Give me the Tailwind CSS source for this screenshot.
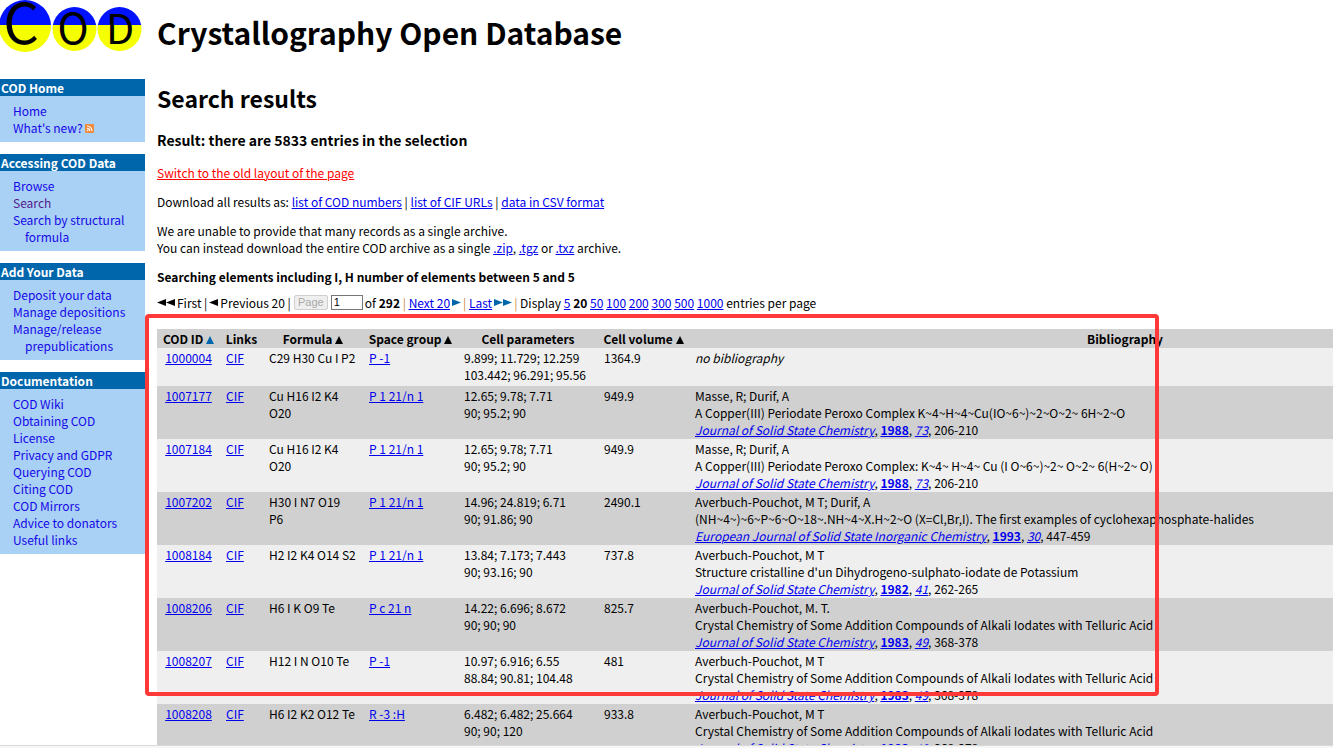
<!DOCTYPE html>
<html lang="en">
  <head>
    <meta charset="UTF-8" />
    <meta name="viewport" content="width=device-width, initial-scale=1.0" />
    <title>Crystallography Open Database: Search results</title>
    <script src="https://cdn.jsdelivr.net/npm/@tailwindcss/browser@4"></script>
  </head>
  <body
    class="relative h-screen overflow-hidden bg-white font-['Noto_Sans_CJK_SC',sans-serif] text-[12px] leading-[17px] text-black"
  >
    <!-- Shared arrow shapes -->
    <svg class="hidden">
      <symbol id="left" viewBox="0 0 9 7"><path d="M9 0v7L0 3.500z" /></symbol>
      <symbol id="right" viewBox="0 0 9 7"><path d="M0 0v7l9-3.500z" /></symbol>
      <symbol id="up" viewBox="0 0 8 8"><path d="M4 0l4 8H0z" /></symbol>
    </svg>

    <div class="flex h-full items-start gap-3">
      <!-- Sidebar -->
      <aside class="w-[145px] shrink-0">
        <a href="#" aria-label="COD">
          <svg class="h-[79px] w-[145px]" viewBox="0 0 145 79">
            <defs>
              <linearGradient id="flag" gradientUnits="userSpaceOnUse" x1="0" y1="0" x2="0" y2="50">
                <stop offset="0.5" stop-color="#0012ff" />
                <stop offset="0.5" stop-color="#f6ff00" />
              </linearGradient>
            </defs>
            <g fill="url(#flag)">
              <circle cx="25" cy="26" r="26" />
              <circle cx="74.500" cy="29" r="22" />
              <circle cx="119.500" cy="29" r="22" />
            </g>
            <g text-anchor="middle" class="font-['Noto_Sans_CJK_SC',sans-serif]">
              <text x="21" y="44" font-size="56">C</text>
              <text x="73" y="44" font-size="42">O</text>
              <text x="120" y="44" font-size="41">D</text>
            </g>
          </svg>
        </a>
        <nav
          class="flex flex-col gap-3 [&_a]:text-[#1508e8] [&_h3]:bg-[#0066ac] [&_h3]:px-px [&_h3]:font-bold [&_h3]:text-white [&_li]:pl-3 [&_li]:-indent-3 [&_ul]:bg-[#a9d0f5] [&_ul]:py-[6px] [&_ul]:pr-3 [&_ul]:pl-[13px]"
        >
          <section>
            <h3>COD Home</h3>
            <ul>
              <li><a href="#">Home</a></li>
              <li>
                <a href="#">What's new?
                  <svg class="inline h-[9px] w-[9px] align-baseline" viewBox="0 0 9 9">
                    <rect width="9" height="9" rx="1" fill="#f08a3c" />
                    <g fill="none" stroke="#fff" stroke-width="1.100">
                      <path d="M2 4.300a2.700 2.700 0 0 1 2.700 2.700M2 2a5 5 0 0 1 5 5" />
                    </g>
                    <circle cx="2.500" cy="6.500" r=".8" fill="#fff" />
                  </svg></a>
              </li>
            </ul>
          </section>
          <section>
            <h3>Accessing COD Data</h3>
            <ul>
              <li><a href="#">Browse</a></li>
              <li><a href="#"><span class="text-[#551a8b]">Search</span></a></li>
              <li><a href="#">Search by structural formula</a></li>
            </ul>
          </section>
          <section>
            <h3>Add Your Data</h3>
            <ul>
              <li><a href="#">Deposit your data</a></li>
              <li><a href="#">Manage depositions</a></li>
              <li><a href="#">Manage/release prepublications</a></li>
            </ul>
          </section>
          <section>
            <h3>Documentation</h3>
            <ul>
              <li><a href="#">COD Wiki</a></li>
              <li><a href="#">Obtaining COD</a></li>
              <li><a href="#">License</a></li>
              <li><a href="#">Privacy and GDPR</a></li>
              <li><a href="#">Querying COD</a></li>
              <li><a href="#">Citing COD</a></li>
              <li><a href="#">COD Mirrors</a></li>
              <li><a href="#">Advice to donators</a></li>
              <li><a href="#">Useful links</a></li>
            </ul>
          </section>
        </nav>
      </aside>

      <!-- Search results -->
      <main class="min-w-0 flex-1 [&_a]:text-[#0000ee] [&_a]:underline">
        <h1 class="pt-[10px] text-[30px] leading-[44px] font-bold">Crystallography Open Database</h1>
        <h2 class="mt-[25px] text-[23px] leading-[38px] font-bold">Search results</h2>
        <h3 class="mt-[13px] text-[14px] leading-[20px] font-bold">
          Result: there are 5833 entries in the selection
        </h3>
        <p class="mt-[14px]"><a href="#"><span class="text-[#ff0000] underline">Switch to the old layout of the page</span></a></p>
        <p class="mt-3">
          Download all results as: <a href="#">list of COD numbers</a> |
          <a href="#">list of CIF URLs</a> | <a href="#">data in CSV format</a>
        </p>
        <p class="mt-3">
          We are unable to provide that many records as a single archive.<br />
          You can instead download the entire COD archive as a single
          <a href="#">.zip</a>, <a href="#">.tgz</a> or <a href="#">.txz</a> archive.
        </p>
        <p class="mt-3 font-bold">Searching elements including I, H number of elements between 5 and 5</p>

        <form class="mt-2 flex h-[18px] items-center gap-[2px] whitespace-nowrap [&_svg]:h-[7px] [&_svg]:w-[9px]">
          <svg><use href="#left" /></svg><svg class="-ml-[2px]"><use href="#left" /></svg>
          <span>First |</span>
          <svg><use href="#left" /></svg>
          <span>Previous 20 |</span>
          <button
            type="button"
            disabled
            class="mx-px h-[15px] w-[34px] rounded-xs border border-[#cfcfcf] bg-[#efefef] font-['Liberation_Sans',sans-serif] text-[11px] leading-[13px] text-[#a8a8a8]"
          >
            Page
          </button>
          <input
            type="text"
            value="1"
            aria-label="Page"
            class="h-[15px] w-8 border border-[#767676] px-[2px] font-['Liberation_Sans',sans-serif] text-[11px]"
          />
          <span>of <b>292</b> <span class="text-[#d08a3a]">|</span> <a href="#">Next 20</a></span>
          <svg class="fill-[#0066ac]"><use href="#right" /></svg>
          <span><span class="text-[#d08a3a]">|</span> <a href="#">Last</a></span>
          <svg class="fill-[#0066ac]"><use href="#right" /></svg><svg class="-ml-[2px] fill-[#0066ac]"><use href="#right" /></svg>
          <span><span class="text-[#d08a3a]">|</span> Display <a href="#">5</a> <b>20</b> <a href="#">50</a> <a href="#">100</a>
            <a href="#">200</a> <a href="#">300</a> <a href="#">500</a> <a href="#">1000</a> entries per page</span>
        </form>

        <table
          class="mt-[18px] w-[1404px] table-fixed [&_svg]:inline [&_svg]:h-2 [&_svg]:w-2 [&_svg]:align-baseline [&_td]:px-[6px] [&_td]:py-px [&_td]:align-top [&_td:first-child]:text-center [&_th]:px-0 [&_th]:py-px [&_th]:whitespace-nowrap"
        >
          <colgroup>
            <col class="w-[63px]" />
            <col class="w-[43px]" />
            <col class="w-[100px]" />
            <col class="w-[95px]" />
            <col class="w-[140px]" />
            <col class="w-[91px]" />
            <col />
          </colgroup>
          <thead class="bg-[#d0d0d0]">
            <tr>
              <th>COD ID <svg class="fill-[#0066ac]"><use href="#up" /></svg></th>
              <th>Links</th>
              <th>Formula <svg><use href="#up" /></svg></th>
              <th>Space group <svg><use href="#up" /></svg></th>
              <th>Cell parameters</th>
              <th>Cell volume <svg><use href="#up" /></svg></th>
              <th>Bibliography</th>
            </tr>
          </thead>
          <tbody>
            <tr class="h-[38px] bg-[#efefef]">
              <td><a href="#">1000004</a></td>
              <td><a href="#">CIF</a></td>
              <td>C29 H30 Cu I P2</td>
              <td><a href="#">P -1</a></td>
              <td>9.899; 11.729; 12.259<br />103.442; 96.291; 95.56</td>
              <td>1364.9</td>
              <td><i>no bibliography</i></td>
            </tr>
            <tr class="h-[38px] bg-[#d0d0d0]">
              <td><a href="#">1007177</a></td>
              <td><a href="#">CIF</a></td>
              <td>Cu H16 I2 K4 O20</td>
              <td><a href="#">P 1 21/n 1</a></td>
              <td>12.65; 9.78; 7.71<br />90; 95.2; 90</td>
              <td>949.9</td>
              <td>
                Masse, R; Durif, A<br />A Copper(III) Periodate Peroxo Complex K~4~H~4~Cu(IO~6~)~2~O~2~ 6H~2~O<br />
                <a href="#"><i>Journal of Solid State Chemistry</i></a>, <a href="#"><b>1988</b></a>, <a href="#"><i>73</i></a>, 206-210
              </td>
            </tr>
            <tr class="h-[38px] bg-[#efefef]">
              <td><a href="#">1007184</a></td>
              <td><a href="#">CIF</a></td>
              <td>Cu H16 I2 K4 O20</td>
              <td><a href="#">P 1 21/n 1</a></td>
              <td>12.65; 9.78; 7.71<br />90; 95.2; 90</td>
              <td>949.9</td>
              <td>
                Masse, R; Durif, A<br />A Copper(III) Periodate Peroxo Complex: K~4~ H~4~ Cu (I O~6~)~2~ O~2~ 6(H~2~ O)<br />
                <a href="#"><i>Journal of Solid State Chemistry</i></a>, <a href="#"><b>1988</b></a>, <a href="#"><i>73</i></a>, 206-210
              </td>
            </tr>
            <tr class="h-[38px] bg-[#d0d0d0]">
              <td><a href="#">1007202</a></td>
              <td><a href="#">CIF</a></td>
              <td>H30 I N7 O19 P6</td>
              <td><a href="#">P 1 21/n 1</a></td>
              <td>14.96; 24.819; 6.71<br />90; 91.86; 90</td>
              <td>2490.1</td>
              <td>
                Averbuch-Pouchot, M T; Durif, A<br />(NH~4~)~6~P~6~O~18~.NH~4~X.H~2~O (X=Cl,Br,I). The first examples of cyclohexaphosphate-halides<br />
                <a href="#"><i>European Journal of Solid State Inorganic Chemistry</i></a>, <a href="#"><b>1993</b></a>, <a href="#"><i>30</i></a>, 447-459
              </td>
            </tr>
            <tr class="h-[38px] bg-[#efefef]">
              <td><a href="#">1008184</a></td>
              <td><a href="#">CIF</a></td>
              <td>H2 I2 K4 O14 S2</td>
              <td><a href="#">P 1 21/n 1</a></td>
              <td>13.84; 7.173; 7.443<br />90; 93.16; 90</td>
              <td>737.8</td>
              <td>
                Averbuch-Pouchot, M T<br />Structure cristalline d'un Dihydrogeno-sulphato-iodate de Potassium<br />
                <a href="#"><i>Journal of Solid State Chemistry</i></a>, <a href="#"><b>1982</b></a>, <a href="#"><i>41</i></a>, 262-265
              </td>
            </tr>
            <tr class="h-[38px] bg-[#d0d0d0]">
              <td><a href="#">1008206</a></td>
              <td><a href="#">CIF</a></td>
              <td>H6 I K O9 Te</td>
              <td><a href="#">P c 21 n</a></td>
              <td>14.22; 6.696; 8.672<br />90; 90; 90</td>
              <td>825.7</td>
              <td>
                Averbuch-Pouchot, M. T.<br />Crystal Chemistry of Some Addition Compounds of Alkali Iodates with Telluric Acid<br />
                <a href="#"><i>Journal of Solid State Chemistry</i></a>, <a href="#"><b>1983</b></a>, <a href="#"><i>49</i></a>, 368-378
              </td>
            </tr>
            <tr class="h-[38px] bg-[#efefef]">
              <td><a href="#">1008207</a></td>
              <td><a href="#">CIF</a></td>
              <td>H12 I N O10 Te</td>
              <td><a href="#">P -1</a></td>
              <td>10.97; 6.916; 6.55<br />88.84; 90.81; 104.48</td>
              <td>481</td>
              <td>
                Averbuch-Pouchot, M T<br />Crystal Chemistry of Some Addition Compounds of Alkali Iodates with Telluric Acid<br />
                <a href="#"><i>Journal of Solid State Chemistry</i></a>, <a href="#"><b>1983</b></a>, <a href="#"><i>49</i></a>, 368-378
              </td>
            </tr>
            <tr class="h-[38px] bg-[#d0d0d0]">
              <td><a href="#">1008208</a></td>
              <td><a href="#">CIF</a></td>
              <td>H6 I2 K2 O12 Te</td>
              <td><a href="#">R -3 :H</a></td>
              <td>6.482; 6.482; 25.664<br />90; 90; 120</td>
              <td>933.8</td>
              <td>
                Averbuch-Pouchot, M T<br />Crystal Chemistry of Some Addition Compounds of Alkali Iodates with Telluric Acid<br />
                <a href="#"><i>Journal of Solid State Chemistry</i></a>, <a href="#"><b>1983</b></a>, <a href="#"><i>49</i></a>, 368-378
              </td>
            </tr>
          </tbody>
        </table>
      </main>
    </div>

    <!-- Highlight frame over the table -->
    <div class="pointer-events-none absolute top-[314px] left-[145px] h-[382px] w-[1014px] rounded-sm border-4 border-[#ff3838]"></div>
    <!-- Window edge -->
    <div class="absolute inset-x-0 bottom-0 h-[3px] border-t border-[#d8d8d8] bg-[#f6f6f6]"></div>
  </body>
</html>
